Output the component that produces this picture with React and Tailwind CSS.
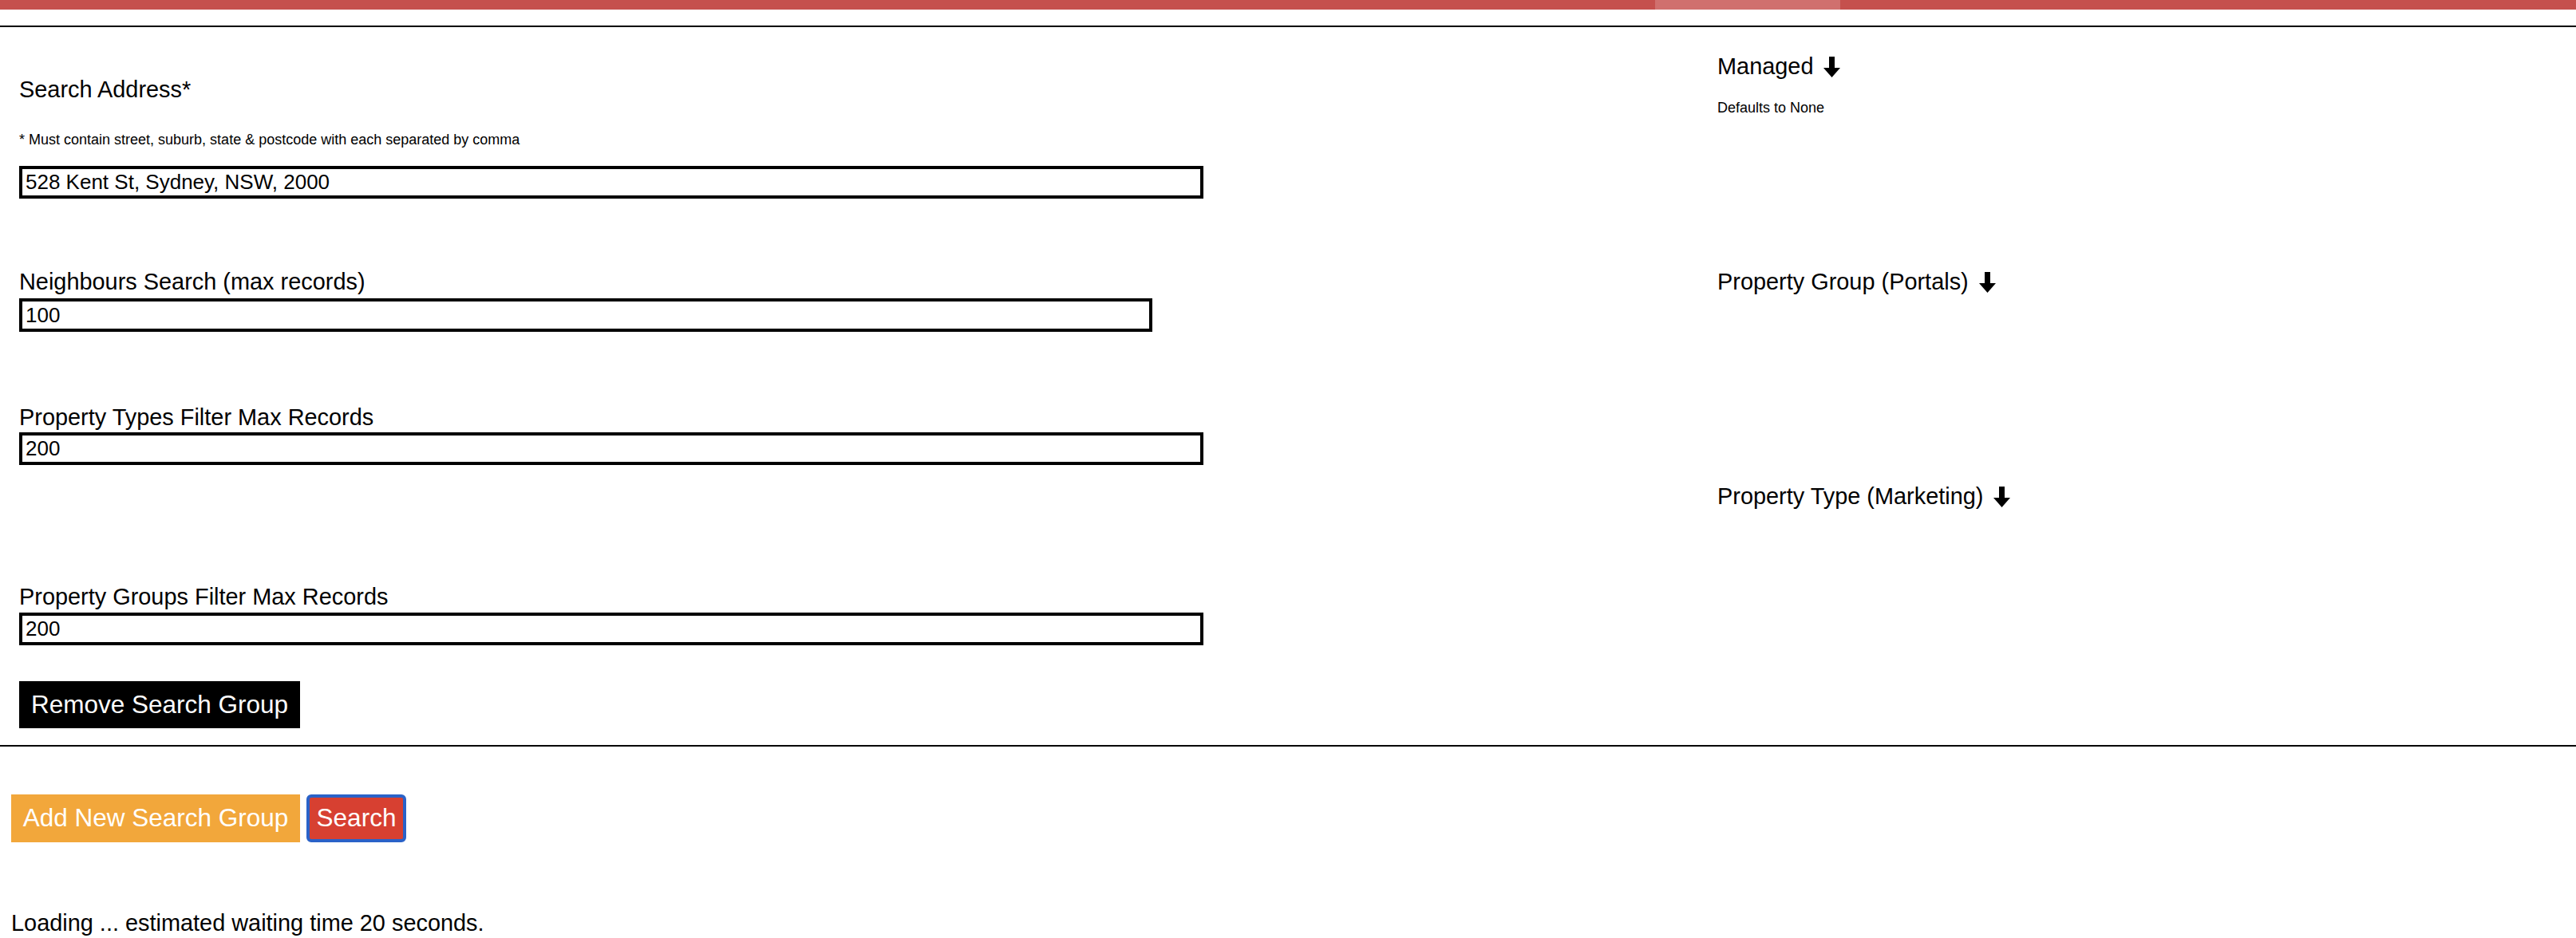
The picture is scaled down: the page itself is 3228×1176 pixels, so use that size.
import React from "react";

function Arrow() {
  return (
    <svg width="21" height="26" viewBox="0 0 21 26" className="ml-[13px] inline-block shrink-0">
      <rect x="7" y="0" width="7" height="15" fill="#000" />
      <polygon points="0,14 21,14 10.5,26" fill="#000" />
    </svg>
  );
}

function Field({ value, w, h = "h-[41px]" }) {
  return (
    <input
      readOnly
      value={value}
      className={`${w} ${h} border-4 border-black bg-white px-[4px] text-[26px] text-black outline-none font-['Liberation_Sans',Arial,sans-serif]`}
    />
  );
}

export default function App() {
  return (
    <div className="min-h-screen bg-white text-black font-['Liberation_Sans',Arial,sans-serif]">
      <div className="flex h-[12px]">
        <div className="w-[2074px] bg-[#c5504d]" />
        <div className="w-[232px] bg-[#d0706e]" />
        <div className="flex-1 bg-[#c5504d]" />
      </div>
      <div className="h-[20px]" />
      <div className="h-[2px] bg-black" />

      <div className="flex pl-[24px]">
        <div className="flex w-[2128px] flex-col items-start">
          <div className="mt-[62px] text-[28.9px] leading-[33px]">Search Address*</div>
          <div className="mt-[36px] text-[18px] leading-[21px]">
            * Must contain street, suburb, state &amp; postcode with each separated by comma
          </div>
          <div className="mt-[22px]">
            <Field value="528 Kent St, Sydney, NSW, 2000" w="w-[1484px]" />
          </div>
          <div className="mt-[88px] text-[28.9px] leading-[33px]">Neighbours Search (max records)</div>
          <div className="mt-[4px]">
            <Field value="100" w="w-[1420px]" h="h-[42px]" />
          </div>
          <div className="mt-[91px] text-[28.9px] leading-[33px]">Property Types Filter Max Records</div>
          <div className="mt-[2px]">
            <Field value="200" w="w-[1484px]" />
          </div>
          <div className="mt-[149px] text-[28.9px] leading-[33px]">Property Groups Filter Max Records</div>
          <div className="mt-[3px]">
            <Field value="200" w="w-[1484px]" />
          </div>
          <button className="mt-[45px] flex h-[59px] w-[352px] items-center justify-center bg-black text-[31.5px] leading-none text-white">
            Remove Search Group
          </button>
        </div>

        <div className="flex flex-col items-start">
          <div className="mt-[33px] flex items-center text-[28.9px] leading-[33px]">
            Managed
            <Arrow />
          </div>
          <div className="mt-[25px] text-[18px] leading-[21px]">Defaults to None</div>
          <div className="mt-[191px] flex items-center text-[28.9px] leading-[33px]">
            Property Group (Portals)
            <Arrow />
          </div>
          <div className="mt-[236px] flex items-center text-[28.9px] leading-[33px]">
            Property Type (Marketing)
            <Arrow />
          </div>
        </div>
      </div>

      <div className="mt-[21px] h-[2px] bg-black" />

      <div className="mt-[60px] flex gap-[8px] pl-[14px]">
        <button className="flex h-[60px] w-[362px] items-center justify-center bg-[#f2a73b] text-[31.5px] leading-none text-white">
          Add New Search Group
        </button>
        <button className="flex h-[60px] w-[125px] items-center justify-center rounded-[6px] border-4 border-[#2a62c8] bg-[#d74031] text-[31.5px] leading-none text-white">
          Search
        </button>
      </div>

      <div className="mt-[85px] pl-[14px] text-[28.9px] leading-[33px]">
        Loading ... estimated waiting time 20 seconds.
      </div>
    </div>
  );
}
